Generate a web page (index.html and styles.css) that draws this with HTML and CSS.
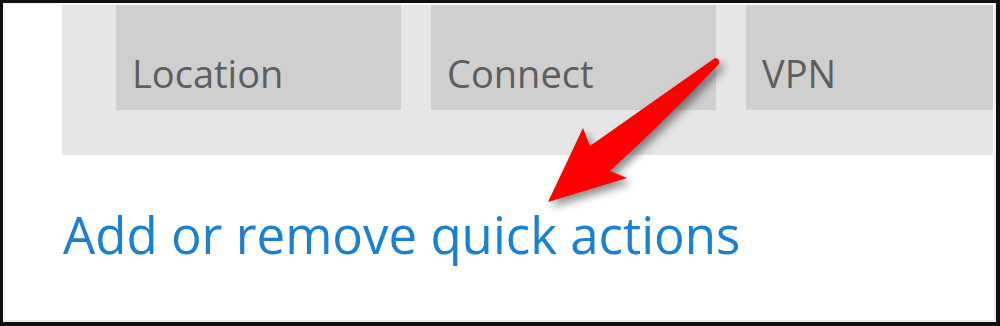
FILE: index.html
```html
<!DOCTYPE html>
<html lang="en">
<head>
<meta charset="utf-8">
<title>Quick actions</title>
<link rel="stylesheet" href="styles.css">
</head>
<body>
<div class="frame">
  <div class="panel">
    <div class="tile"><span class="tile-label">Location</span></div>
    <div class="tile"><span class="tile-label">Connect</span></div>
    <div class="tile tile-last"><span class="tile-label">VPN</span></div>
  </div>
  <a class="link" href="#">Add or remove quick actions</a>
  <svg class="arrow" width="1000" height="326" viewBox="0 0 1000 326" aria-hidden="true">
    <path d="M715,58 L590,146 L583,128 L548,202 L627,178 L610,171 Q668,118 719,64 Q720,58 715,58 Z" fill="#ff0000"/>
  </svg>
</div>
</body>
</html>
```
FILE: styles.css
```css
html, body {
  margin: 0;
  padding: 0;
  background: #ffffff;
}

.frame {
  position: relative;
  box-sizing: border-box;
  width: 1000px;
  height: 326px;
  border-style: solid;
  border-color: #101010;
  border-width: 3px 4px 4px 3px;
  background: #ffffff;
  box-shadow: inset -2px -2px 0 #ececec, inset 2px 2px 0 #f8f8f8;
  overflow: hidden;
}

.panel {
  display: flex;
  gap: 30px;
  margin: 2px 3px 0 59px;
  padding-left: 54px;
  height: 150px;
  background: #e6e6e6;
}

.tile {
  flex: 0 0 285px;
  height: 105px;
  background: #cfcfcf;
  box-sizing: border-box;
  padding: 44px 0 0 16px;
}

.tile-last {
  flex: 1 1 auto;
}

.tile-label {
  display: block;
  font-family: "Open Sans", "Noto Sans", sans-serif;
  font-size: 38px;
  line-height: 48px;
  color: #5e5e5e;
}

.link {
  display: block;
  margin: 44px 0 0 60px;
  font-family: "Open Sans", "Noto Sans", sans-serif;
  font-size: 51px;
  line-height: 70px;
  color: #1a80d4;
  text-decoration: none;
  white-space: nowrap;
}

.arrow {
  position: absolute;
  left: -3px;
  top: -3px;
  filter: drop-shadow(4px 5px 4px rgba(0, 0, 0, 0.45));
}
```
